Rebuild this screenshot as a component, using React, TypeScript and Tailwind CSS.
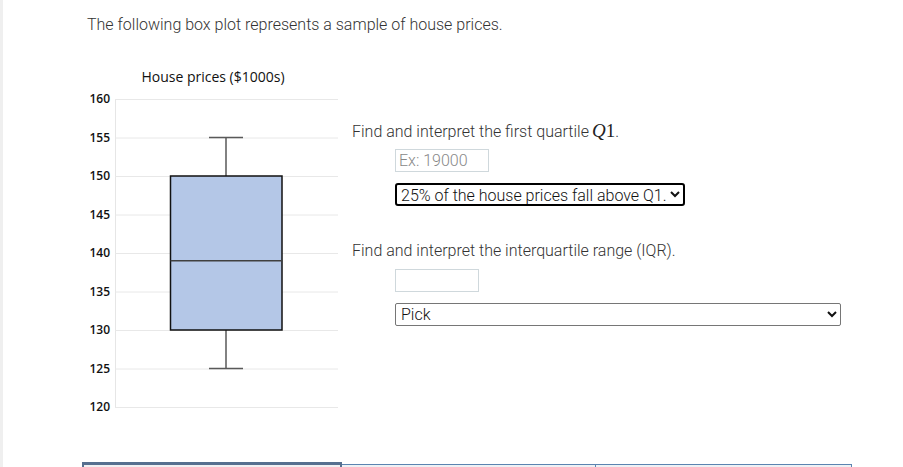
import React from 'react';

const ticks = [160, 155, 150, 145, 140, 135, 130, 125, 120];

// y pixel for a value on the chart (160 -> 99, 120 -> 407)
const yOf = (v: number) => 99 + ((160 - v) / 40) * 308;

function BoxPlot() {
    const cx = 226;
    const q1 = yOf(130);
    const q3 = yOf(150);
    const med = yOf(139);
    const hi = yOf(155);
    const lo = yOf(125);

    return (
        <svg width={260} height={400} viewBox="80 60 260 400" className="block shrink-0">
            <text
                x={213}
                y={82}
                textAnchor="middle"
                fontFamily="'Open Sans', 'Liberation Sans', sans-serif"
                fontSize={14}
                fontWeight={500}
                fill="#111"
            >
                House prices ($1000s)
            </text>
            <line x1={115.5} y1={99} x2={115.5} y2={407} stroke="#e6e6e6" strokeWidth={1} />
            {ticks.map((t) => (
                <g key={t}>
                    <line x1={115} y1={yOf(t) + 0.5} x2={338} y2={yOf(t) + 0.5} stroke="#e8e8e8" strokeWidth={1} />
                    <text
                        x={110}
                        y={yOf(t) + 4}
                        textAnchor="end"
                        fontFamily="'Open Sans', 'Liberation Sans', sans-serif"
                        fontSize={12}
                        fontWeight={600}
                        fill="#111"
                    >
                        {t}
                    </text>
                </g>
            ))}
            {/* whiskers */}
            <line x1={cx} y1={hi} x2={cx} y2={q3} stroke="#595959" strokeWidth={1.5} />
            <line x1={209} y1={hi} x2={243} y2={hi} stroke="#595959" strokeWidth={1.5} />
            <line x1={cx} y1={q1} x2={cx} y2={lo} stroke="#595959" strokeWidth={1.5} />
            <line x1={209} y1={lo} x2={243} y2={lo} stroke="#595959" strokeWidth={1.5} />
            {/* box */}
            <rect x={170.5} y={q3} width={111.5} height={q1 - q3} fill="#b4c7e7" stroke="#111" strokeWidth={1.5} />
            <line x1={170.5} y1={med} x2={282} y2={med} stroke="#404040" strokeWidth={1.5} />
        </svg>
    );
}

function Math1() {
    return (
        <span className="ml-[3px] text-[19px] text-[#222]" style={{ fontFamily: "'Liberation Serif', serif" }}>
            <i>Q</i>1
        </span>
    );
}

export default function App() {
    return (
        <div
            className="h-[467px] w-full overflow-hidden bg-white border-l-[3px] border-[#efefef] flex flex-col"
            style={{ fontFamily: "Roboto, 'Liberation Sans', sans-serif" }}
        >
            <div className="h-[462px] shrink-0 pl-[84px] pt-[13px]">
                <p className="text-[16px] leading-6 font-light text-[#333]">
                    The following box plot represents a sample of house prices.
                </p>
                <div className="flex mt-[23px] -ml-[7px]">
                    <BoxPlot />
                    <div className="ml-[12px] pt-[59px] flex flex-col">
                        <p className="text-[16px] leading-6 font-light text-[#333]">
                            Find and interpret the first quartile
                            <Math1 />.
                        </p>
                        <div className="pl-[43px] mt-[5px] flex flex-col items-start">
                            <input
                                className="w-[94px] h-[23px] border border-[#cfd8dc] px-[3px] text-[16px] font-light text-[#333] placeholder:text-[#888] outline-none"
                                placeholder="Ex: 19000"
                            />
                            <select
                                className="mt-[11px] h-[23px] border-2 border-black rounded-[3px] text-[16px] font-light text-[#111] bg-white pl-0"
                                defaultValue="a"
                            >
                                <option value="a">25% of the house prices fall above Q1.</option>
                            </select>
                        </div>
                        <p className="mt-[33px] text-[16px] leading-6 font-light text-[#333]">
                            Find and interpret the interquartile range (IQR).
                        </p>
                        <div className="pl-[43px] mt-[6px] flex flex-col items-start">
                            <input className="w-[84px] h-[23px] border border-[#cfd8dc] px-[3px] text-[16px] outline-none" />
                            <select
                                className="mt-[11px] w-[446px] h-[23px] border border-[#767676] rounded-[2px] text-[16px] font-light text-[#111] bg-white pl-[1px]"
                                defaultValue="p"
                            >
                                <option value="p">Pick</option>
                            </select>
                        </div>
                    </div>
                </div>
            </div>
            <div className="flex pl-[79px] h-10 shrink-0">
                <div className="w-[260px] border-t-[3px] border-x-2 border-[#566f8f] bg-[#f0f0f2]" />
                <div className="w-[254px] mt-[2px] border-t border-r border-[#5b84b1] bg-[#eef1f5]" />
                <div className="w-[256px] mt-[2px] border-t border-r border-[#5b84b1] bg-[#eef1f5]" />
            </div>
        </div>
    );
}
